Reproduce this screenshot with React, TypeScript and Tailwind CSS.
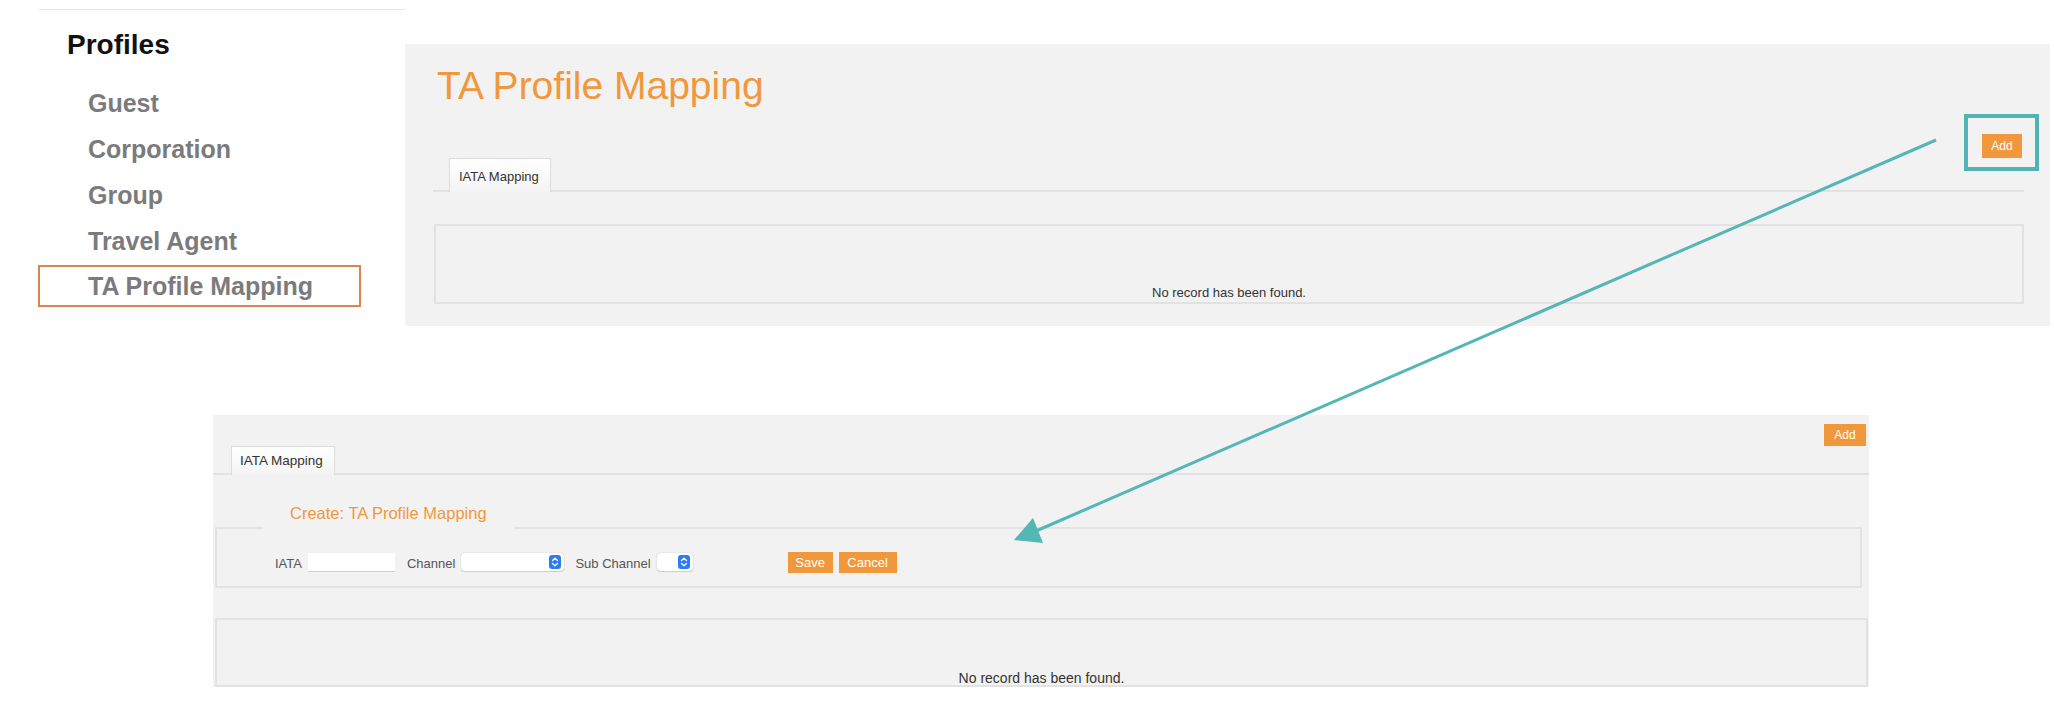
import type { ReactNode } from "react";

const ORANGE = "bg-[#f0983b]";

function OrangeButton({ children, className = "" }: { children: ReactNode; className?: string }) {
  return (
    <button
      type="button"
      className={`flex items-center justify-center ${ORANGE} text-[12px] leading-none text-white ${className}`}
    >
      {children}
    </button>
  );
}

function Tab({ label, className = "" }: { label: string; className?: string }) {
  return (
    <div
      className={`-mb-[2px] flex items-center border border-b-0 border-[#dcdcdc] bg-gradient-to-b from-white to-[#f4f4f4] text-[#333] ${className}`}
    >
      {label}
    </div>
  );
}

function SelectBox({ width }: { width: string }) {
  return (
    <div
      className={`flex h-[18px] ${width} items-center justify-end rounded-[4px] bg-white pr-[3px] shadow-[0_0_1px_rgba(0,0,0,0.35),0_1px_1px_rgba(0,0,0,0.12)]`}
    >
      <svg width="12" height="14" viewBox="0 0 12 14">
        <rect x="0" y="0" width="12" height="14" rx="3" fill="#2f7bf5" />
        <path d="M3.5 5.5 L6 3.2 L8.5 5.5" stroke="white" strokeWidth="1.3" fill="none" strokeLinecap="round" strokeLinejoin="round" />
        <path d="M3.5 8.5 L6 10.8 L8.5 8.5" stroke="white" strokeWidth="1.3" fill="none" strokeLinecap="round" strokeLinejoin="round" />
      </svg>
    </div>
  );
}

function Sidebar() {
  const items = ["Guest", "Corporation", "Group", "Travel Agent"];
  return (
    <aside className="w-[405px] shrink-0">
      <div className="ml-[39px] h-px bg-[#e6e6e6] mt-[9px]" />
      <h2 className="mt-[19px] pl-[67px] text-[28px] font-bold leading-[32px] text-[#111]">Profiles</h2>
      <ul className="mt-[19px]">
        {items.map((it) => (
          <li key={it} className="pl-[88px] text-[25px] font-bold leading-[46px] text-[#7b7b7b]">
            {it}
          </li>
        ))}
        <li className="ml-[38px] mt-px h-[42px] w-[323px] border-2 border-[#d9864d] pl-[48px] text-[25px] font-bold leading-[38px] text-[#7b7b7b]">
          TA Profile Mapping
        </li>
      </ul>
    </aside>
  );
}

function TopPanel() {
  return (
    <section className="mt-[44px] flex h-[282px] w-[1645px] flex-col bg-[#f2f2f2]">
      <h1 className="pl-[32px] pt-[20px] text-[39px] leading-[44px] text-[#f0983b]">TA Profile Mapping</h1>

      <div className="mt-[6px] flex h-[44px] items-start justify-end pr-[11px]">
        <div className="relative z-10 h-[57px] w-[75px] shrink-0 border-4 border-[#50b4b4] pl-[14px] pt-[16px]">
          <OrangeButton className="h-[24px] w-[40px]">Add</OrangeButton>
        </div>
      </div>

      <div className="ml-[28px] flex w-[1591px] border-b-2 border-[#e2e2e2]">
        <Tab label="IATA Mapping" className="ml-[16px] h-[34px] w-[102px] pl-[9px] pt-[3px] text-[13px]" />
      </div>

      <div className="ml-[29px] mt-[32px] flex h-[80px] w-[1590px] items-end justify-center border-2 border-[#e2e2e2] pb-[2px]">
        <span className="text-[13px] leading-[14px] text-[#333]">No record has been found.</span>
      </div>
    </section>
  );
}

function BottomPanel() {
  return (
    <section className="ml-[213px] mt-[89px] flex h-[272px] w-[1656px] flex-col bg-[#f2f2f2]">
      <div className="flex h-[31px] justify-end pr-[3px] pt-[9px]">
        <OrangeButton className="h-[22px] w-[42px] text-[12.5px]">Add</OrangeButton>
      </div>

      <div className="flex border-b-2 border-[#e2e2e2]">
        <Tab label="IATA Mapping" className="ml-[18px] h-[29px] w-[104px] pl-[8px] pt-[1px] text-[13.5px]" />
      </div>

      <fieldset className="ml-[2px] mt-[29px] w-[1647px] border-2 border-[#e2e2e2]">
        <legend className="ml-[46px] px-[27px] pb-[28px] text-[16.5px] leading-[19px] text-[#f0983b]">
          Create: TA Profile Mapping
        </legend>
        <div className="flex h-[35px] items-start pl-[58px] text-[13px] text-[#555]">
          <div className="flex items-center">
            <label className="mr-[6px] pt-[3px]">IATA</label>
            <input
              type="text"
              className="mr-[12px] h-[19px] w-[87px] border-b border-[#cfcfcf] bg-white outline-none"
            />
            <label className="mr-[6px] pt-[3px]">Channel</label>
            <div className="mr-[11px]">
              <SelectBox width="w-[103px]" />
            </div>
            <label className="mr-[6px] pt-[3px]">Sub Channel</label>
            <div className="mr-[95px]">
              <SelectBox width="w-[36px]" />
            </div>
            <OrangeButton className="mr-[6px] h-[21px] w-[45px] text-[13px]">Save</OrangeButton>
            <OrangeButton className="h-[21px] w-[58px] text-[13px]">Cancel</OrangeButton>
          </div>
        </div>
      </fieldset>

      <div className="ml-[2px] mt-[30px] flex h-[69px] w-[1653px] items-end justify-center border-2 border-[#e2e2e2]">
        <span className="text-[14px] leading-[14px] text-[#333]">No record has been found.</span>
      </div>
    </section>
  );
}

export default function App() {
  return (
    <div className="relative h-[710px] w-[2054px] overflow-hidden bg-white font-['Liberation_Sans',Arial,sans-serif]">
      <div className="flex">
        <Sidebar />
        <TopPanel />
      </div>
      <BottomPanel />

      {/* annotation arrow from the Add button down to the create form */}
      <svg className="pointer-events-none absolute left-0 top-0 z-20" width="2054" height="710">
        <line x1="1936" y1="140" x2="1036" y2="531" stroke="#55b6b6" strokeWidth="3" />
        <polygon points="1014,540 1033,518 1043,543" fill="#55b6b6" />
      </svg>
    </div>
  );
}
